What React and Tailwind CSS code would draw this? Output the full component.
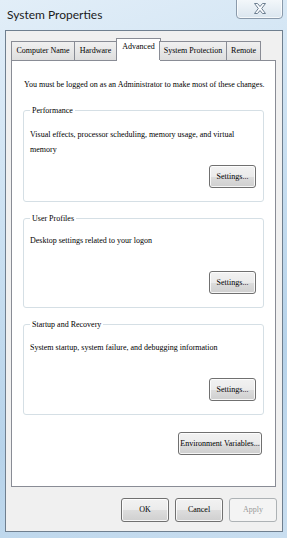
import React from "react";

const serif = { fontFamily: '"Liberation Serif", "Times New Roman", serif' };

function Btn({ children, w = 47, h = 23, disabled = false }) {
  return (
    <div
      className={
        "rounded-[3px] border flex items-center justify-center text-[8px] leading-none " +
        (disabled
          ? "border-[#adb2b5] bg-[#f4f4f4] text-[#9a9a9a]"
          : "border-[#707070] bg-[linear-gradient(to_bottom,#f2f2f2_0%,#ebebeb_50%,#dddddd_51%,#cfcfcf_100%)] text-black shadow-[inset_0_0_0_1px_rgba(255,255,255,0.8)]")
      }
      style={{ width: w, height: h }}
    >
      {children}
    </div>
  );
}

function Group({ label, text, h, textPt = 16 }) {
  return (
    <div
      className="relative mx-[11px] rounded-[3px] border border-[#d5dfe5] flex flex-col"
      style={{ height: h }}
    >
      <div className="absolute -top-[6px] left-[6px] bg-white px-[2px] text-[8px] leading-[12px] text-black">
        {label}
      </div>
      <div className="px-[6px] text-[8px] leading-[15px] text-black" style={{ paddingTop: textPt }}>
        {text}
      </div>
      <div className="mt-auto mb-[13px] mr-[7px] flex justify-end">
        <Btn>Settings...</Btn>
      </div>
    </div>
  );
}

export default function App() {
  const tabs = [
    { t: "Computer Name", w: 64 },
    { t: "Hardware", w: 43 },
    { t: "Advanced", w: 45, active: true },
    { t: "System Protection", w: 68 },
    { t: "Remote", w: 35 },
  ];
  return (
    <div className="w-[287px] h-[538px] overflow-hidden bg-[linear-gradient(160deg,#e2eef8_0%,#cfe3f3_30%,#b7d3ea_70%,#c9def0_100%)] flex flex-col">
      {/* title bar */}
      <div className="h-[30px] flex items-start justify-between">
        <div
          className="pl-[7px] pt-[7px] text-[12px] leading-[16px] text-[#1b1b1b]"
          style={{ fontFamily: 'Lato, "Noto Sans", sans-serif' }}
        >
          System Properties
        </div>
        <div className="mr-[4px] -mt-[2px] w-[47px] h-[21px] rounded-b-[4px] border border-[#8a9aab] bg-[linear-gradient(to_bottom,#f4f8fb,#dbe6ef)] shadow-[inset_0_0_0_1px_rgba(255,255,255,0.7)] flex items-center justify-center">
          <svg width="14" height="11" viewBox="0 0 14 11">
            <path
              d="M1.5 0.5 H4.5 L7 3.5 L9.5 0.5 H12.5 L8.7 5.5 L12.5 10.5 H9.5 L7 7.5 L4.5 10.5 H1.5 L5.3 5.5 Z"
              fill="#fbfdff"
              stroke="#6c7e90"
              strokeWidth="1"
              strokeLinejoin="round"
            />
          </svg>
        </div>
      </div>

      {/* dialog body */}
      <div
        className="ml-[5px] mr-[4px] h-[502px] bg-[#f0f0f0] border border-[#6f7f8f] flex flex-col"
        style={serif}
      >
        {/* tabs */}
        <div className="mt-[7px] ml-[5px] flex items-end h-[23px] relative z-10">
          <div className="w-[1px]" />
          {tabs.map((tb) =>
            tb.active ? (
              <div
                key={tb.t}
                className="-mx-[1px] h-[23px] border border-b-0 border-[#898c95] bg-white flex items-start justify-center pt-[4px] text-[8px] leading-none text-black"
                style={{ width: tb.w }}
              >
                {tb.t}
              </div>
            ) : (
              <div
                key={tb.t}
                className="h-[19px] mb-[1px] border border-b-0 border-[#898c95] bg-[linear-gradient(to_bottom,#f0f0f0,#dedede)] flex items-center justify-center text-[8px] leading-none text-black -ml-[1px] first:ml-0"
                style={{ width: tb.w }}
              >
                {tb.t}
              </div>
            )
          )}
        </div>

        {/* panel */}
        <div className="-mt-[1px] ml-[5px] mr-[6px] h-[427px] bg-white border border-[#898c95] flex flex-col">
          <div className="pl-[12px] pt-[19px] text-[8px] leading-[10px] text-black">
            You must be logged on as an Administrator to make most of these changes.
          </div>
          <div className="mt-[20px]">
            <Group
              label="Performance"
              text={<>Visual effects, processor scheduling, memory usage, and virtual<br />memory</>}
              h={92}
            />
          </div>
          <div className="mt-[16px]">
            <Group label="User Profiles" text="Desktop settings related to your logon" h={90} textPt={14} />
          </div>
          <div className="mt-[16px]">
            <Group
              label="Startup and Recovery"
              text="System startup, system failure, and debugging information"
              h={91}
              textPt={15}
            />
          </div>
          <div className="mt-[17px] mr-[13px] flex justify-end">
            <Btn w={84}>Environment Variables...</Btn>
          </div>
        </div>

        {/* bottom buttons */}
        <div className="mt-[11px] mr-[5px] flex justify-end gap-[6px]">
          <Btn w={48} h={24}>OK</Btn>
          <Btn w={48} h={24}>Cancel</Btn>
          <Btn w={48} h={24} disabled>
            Apply
          </Btn>
        </div>
      </div>
    </div>
  );
}
